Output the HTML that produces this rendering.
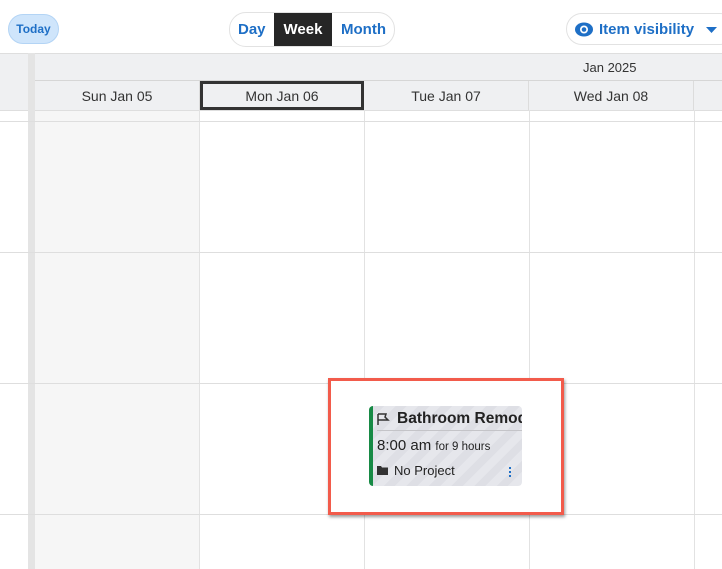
<!DOCTYPE html>
<html><head><style>
body{margin:0;width:722px;height:569px;overflow:hidden;background:#fff;font-family:"Liberation Sans",sans-serif;position:relative}
.a{position:absolute}
.vl{position:absolute;top:110px;bottom:0;width:1px;background:#e2e2e2}
.hl{position:absolute;left:35px;right:0;height:1px;background:#dedede}
.day{position:absolute;top:81px;height:29px;line-height:30px;text-align:center;font-size:14px;color:#333;border-right:1px solid #dcdcdc;box-sizing:border-box}
</style></head><body>
<div class="a" style="left:8px;top:14px;width:51px;height:30px;border-radius:15px;background:#cfe5fb;border:1px solid #b3d4f5;box-sizing:border-box;color:#1e6fc6;font-weight:bold;font-size:12px;line-height:29px;text-align:center">Today</div>
<div class="a" style="left:229px;top:12px;width:166px;height:35px;border:1px solid #e2e2e2;border-radius:17px;box-sizing:border-box;overflow:hidden;font-size:15px;font-weight:bold;line-height:34px">
 <span class="a" style="left:8px;color:#1e6fc6">Day</span>
 <span class="a" style="left:44px;width:58px;height:35px;top:-1px;background:#262626;color:#fff;text-align:center;line-height:35px">Week</span>
 <span class="a" style="left:111px;color:#1e6fc6">Month</span>
</div>
<div class="a" style="left:566px;top:13px;width:170px;height:32px;border:1px solid #e2e2e2;border-radius:16px;box-sizing:border-box;color:#1e6fc6;font-weight:bold;font-size:15px;line-height:31px">
 <svg class="a" style="left:8px;top:8px" width="18" height="15" viewBox="0 0 18 15"><ellipse cx="9" cy="7.5" rx="9" ry="7" fill="#1e6fc6"/><circle cx="9" cy="7.5" r="4" fill="#fff"/><circle cx="9" cy="7.5" r="2.3" fill="#1e6fc6"/></svg>
 <span class="a" style="left:32px">Item visibility</span>
 <svg class="a" style="left:139px;top:13px" width="11" height="7"><path d="M0 0H11L5.5 6Z" fill="#1e6fc6"/></svg>
</div>
<div class="a" style="left:0;top:53px;width:722px;height:57px;background:#eff0f2;border-top:1px solid #dedede;box-sizing:border-box"></div>
<div class="a" style="left:35px;top:80px;right:0;height:1px;background:#d6d6d6"></div>
<div class="a" style="left:583px;top:59px;font-size:13px;color:#333;line-height:18px">Jan 2025</div>
<div class="day" style="left:35px;width:165px">Sun Jan 05</div>
<div class="day" style="left:200px;width:164px;border:3px solid #333;line-height:24px">Mon Jan 06</div>
<div class="day" style="left:364px;width:165px">Tue Jan 07</div>
<div class="day" style="left:529px;width:165px">Wed Jan 08</div>
<div class="a" style="left:0;top:110px;right:0;height:1px;background:#dedede"></div>
<div class="a" style="left:35px;top:111px;width:164px;bottom:0;background:#f6f6f6"></div>
<div class="a" style="left:28px;top:53px;width:7px;bottom:0;background:#e4e4e4"></div>
<div class="vl" style="left:199px"></div><div class="vl" style="left:364px"></div><div class="vl" style="left:529px"></div><div class="vl" style="left:694px"></div>
<div class="hl" style="top:121px;left:0"></div><div class="hl" style="top:252px;left:0"></div><div class="hl" style="top:383px;left:0"></div><div class="hl" style="top:514px;left:0"></div>
<div class="a" style="left:328px;top:378px;width:236px;height:137px;border:3px solid #f25b4b;box-sizing:border-box;background:#fff;box-shadow:1px 2px 3px rgba(0,0,0,.4)"></div>
<div class="a" style="left:369px;top:406px;width:153px;height:80px;border-radius:4px;overflow:hidden;background:repeating-linear-gradient(135deg,#dedfe5 0 8px,#e6e7ec 8px 16px);border-left:4px solid #178a45;box-sizing:border-box">
 <svg class="a" style="left:4px;top:6px" width="15" height="14" viewBox="0 0 15 14"><path d="M1 13V2M1 2H9L8 5L11 8H1" stroke="#333" stroke-width="1.5" fill="none"/></svg>
 <div class="a" style="left:24px;top:4px;font-size:15.5px;font-weight:bold;color:#222;white-space:nowrap">Bathroom Remodel</div>
 <div class="a" style="left:4px;top:24px;width:150px;height:1px;background:#c4c4c8"></div>
 <div class="a" style="left:4px;top:31px;font-size:15px;color:#222;white-space:nowrap">8:00 am <span style="font-size:11.5px">for 9 hours</span></div>
 <svg class="a" style="left:4px;top:60px" width="11" height="9"><path d="M0 0H4L5 1.5H11V9H0Z" fill="#333"/></svg>
 <div class="a" style="left:21px;top:57px;font-size:13px;color:#222">No Project</div>
 <div class="a" style="left:136px;top:61px;width:2px;line-height:0"><i style="display:block;width:2px;height:2px;background:#1e6fc6;margin-bottom:2px"></i><i style="display:block;width:2px;height:2px;background:#1e6fc6;margin-bottom:2px"></i><i style="display:block;width:2px;height:2px;background:#1e6fc6"></i></div>
</div>
</body></html>
